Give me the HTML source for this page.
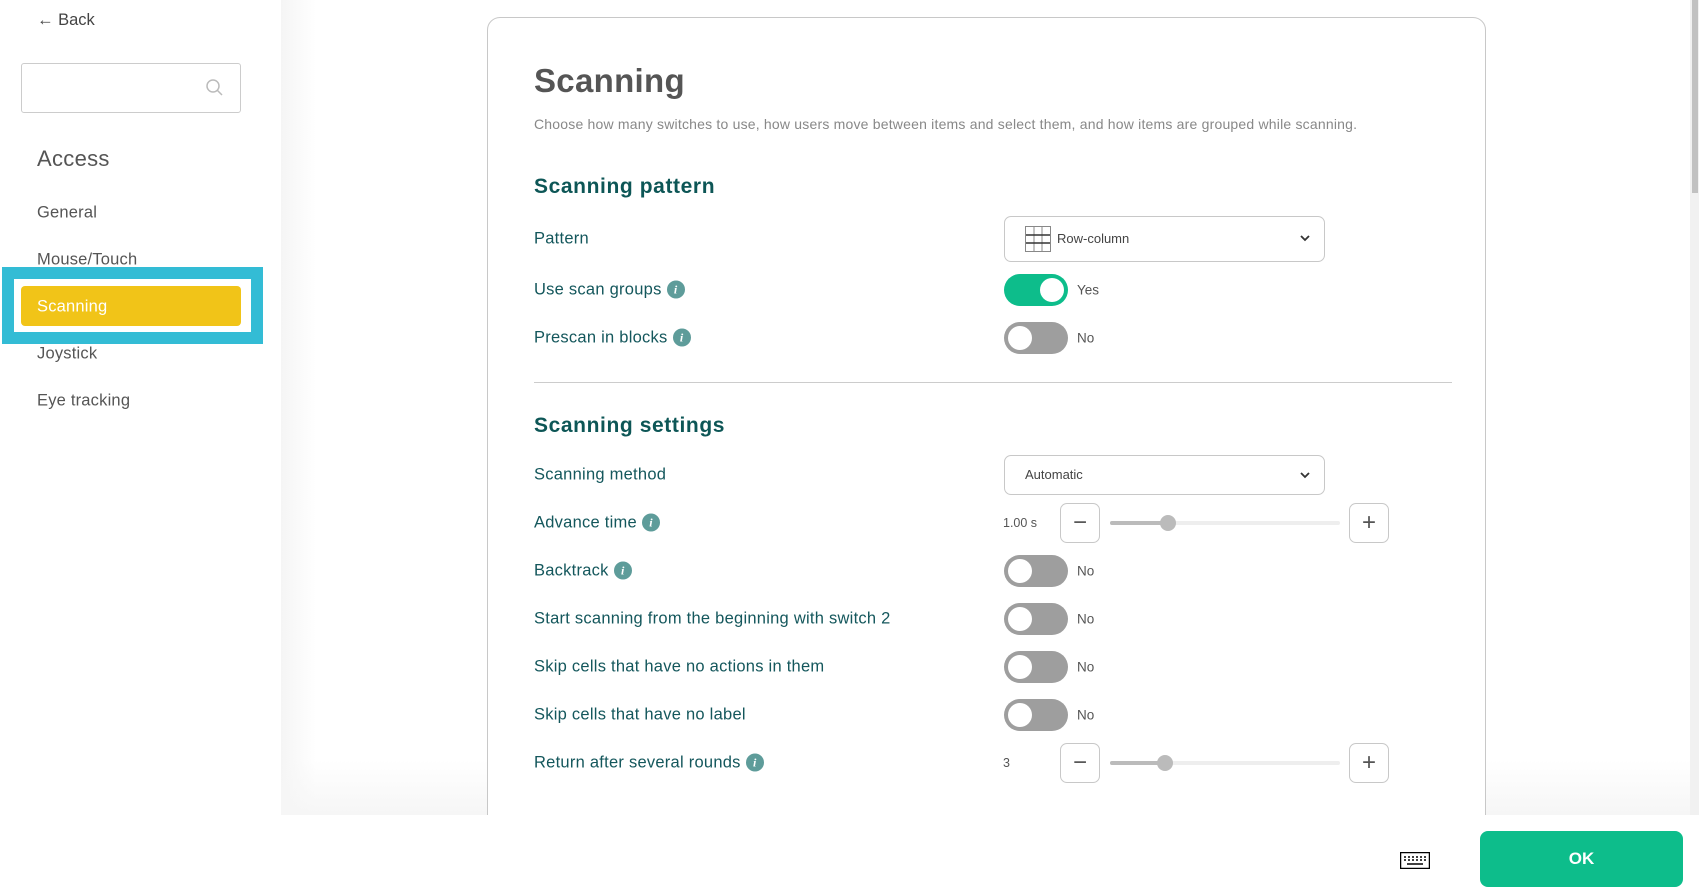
<!DOCTYPE html>
<html><head><meta charset="utf-8"><style>
*{box-sizing:border-box;margin:0;padding:0}
body{width:1699px;height:895px;overflow:hidden;background:#fff;font-family:"Liberation Sans",sans-serif;position:relative}
.a{position:absolute;white-space:nowrap}
.side{left:0;top:0;width:281px;height:895px;background:#fff}
.main{left:281px;top:0;width:1410px;height:815px;background:linear-gradient(to right,#f5f5f5,#fff 35px);}
.fade{left:281px;top:760px;width:1410px;height:55px;background:linear-gradient(#fff0,#f6f6f6)}
.card{left:487px;top:17px;width:999px;height:820px;border:1.5px solid #c8c8c8;border-radius:13px;background:#fff}
.lbl{font-size:16.5px;letter-spacing:0.25px;color:#14575c;transform:translateY(-50%)}
.nav{font-size:16.5px;letter-spacing:0.2px;color:#555;transform:translateY(-50%);left:37px}
.info{display:inline-block;width:18px;height:18px;border-radius:50%;background:#5e9c9a;color:#fff;font:italic bold 12px "Liberation Serif",serif;text-align:center;line-height:18px;vertical-align:1px;margin-left:5px;letter-spacing:0}
.tg{width:64px;height:32px;border-radius:16px;background:#9e9e9e;left:1004px}
.tg::after{content:"";position:absolute;left:4px;top:4px;width:24px;height:24px;border-radius:50%;background:#fff}
.tg.on{background:#0dbd8b}.tg.on::after{left:36px}
.yn{left:1077px;font-size:13.5px;color:#555;transform:translateY(-50%)}
.dd{left:1004px;width:321px;border:1px solid #c8c8c8;border-radius:7px;font-size:13px;color:#444}
.btn{width:40px;height:40px;border:1px solid #c8c8c8;border-radius:7px;background:#fff;text-align:center;line-height:37px;font-size:24px;color:#555}
.trk{left:1110px;width:230px;height:4px;border-radius:2px;background:#eee}
.fill{left:1110px;height:4px;border-radius:2px;background:#bbb}
.th{width:16px;height:16px;border-radius:50%;background:#bbb}
h2{font-weight:bold}
</style></head><body>
<div class="a side"></div>
<div class="a main"></div>
<div class="a fade"></div>
<div class="a" style="left:1690px;top:0;width:9px;height:815px;background:#f1f1f1"></div>
<div class="a" style="left:1692px;top:0;width:6px;height:193px;background:#c1c1c1"></div>

<div class="a" style="left:37px;top:11px;font-size:16.5px;color:#444">← Back</div>
<div class="a" style="left:21px;top:63px;width:220px;height:50px;border:1px solid #ccc;border-radius:3px"></div>
<svg class="a" style="left:205px;top:78px" width="20" height="20"><circle cx="8" cy="8" r="6" fill="none" stroke="#bbb" stroke-width="1.5"/><path d="M12.5 12.5L17 17" stroke="#bbb" stroke-width="1.5"/></svg>
<div class="a" style="left:37px;top:146px;font-size:22px;color:#555;letter-spacing:0.3px">Access</div>
<div class="a nav" style="top:213px">General</div>
<div class="a nav" style="top:260px">Mouse/Touch</div>
<div class="a" style="left:2px;top:267px;width:261px;height:77px;border:12px solid #33bcd5"></div>
<div class="a" style="left:21px;top:286px;width:220px;height:40px;background:#f1c418;border-radius:4px"></div>
<div class="a nav" style="top:307px;color:#fff">Scanning</div>
<div class="a nav" style="top:354px">Joystick</div>
<div class="a nav" style="top:401px">Eye tracking</div>

<div class="a card"></div>
<div class="a" style="left:534px;top:62px;font-size:33px;color:#555;font-weight:bold;letter-spacing:0.3px">Scanning</div>
<div class="a" style="left:534px;top:116px;font-size:14px;letter-spacing:0.2px;color:#888">Choose how many switches to use, how users move between items and select them, and how items are grouped while scanning.</div>
<div class="a" style="left:534px;top:175px;font-size:21px;color:#0d5656;font-weight:bold;letter-spacing:0.6px">Scanning pattern</div>
<div class="a lbl" style="left:534px;top:239px">Pattern</div>
<div class="a lbl" style="left:534px;top:290px">Use scan groups<span class="info">i</span></div>
<div class="a lbl" style="left:534px;top:338px">Prescan in blocks<span class="info">i</span></div>
<div class="a" style="left:534px;top:382px;width:918px;height:1px;background:#ccc"></div>
<div class="a" style="left:534px;top:414px;font-size:21px;color:#0d5656;font-weight:bold;letter-spacing:0.6px">Scanning settings</div>
<div class="a lbl" style="left:534px;top:475px">Scanning method</div>
<div class="a lbl" style="left:534px;top:523px">Advance time<span class="info">i</span></div>
<div class="a lbl" style="left:534px;top:571px">Backtrack<span class="info">i</span></div>
<div class="a lbl" style="left:534px;top:619px">Start scanning from the beginning with switch 2</div>
<div class="a lbl" style="left:534px;top:667px">Skip cells that have no actions in them</div>
<div class="a lbl" style="left:534px;top:715px">Skip cells that have no label</div>
<div class="a lbl" style="left:534px;top:763px">Return after several rounds<span class="info">i</span></div>

<div class="a dd" style="top:216px;height:46px"></div>
<svg class="a" style="left:1025px;top:226px" width="26" height="26"><rect x="0.5" y="0.5" width="25" height="25" fill="none" stroke="#888"/><path d="M9 1V25M17 1V25M1 9H25M1 17H25" stroke="#888"/><path d="M1 9H25M1 17H25" stroke="#333" stroke-width="1.5"/></svg>
<div class="a" style="left:1057px;top:231px;font-size:13px;color:#444">Row-column</div>
<svg class="a" style="left:1300px;top:234px" width="10" height="8"><path d="M1 2L5 6L9 2" fill="none" stroke="#333" stroke-width="1.8"/></svg>
<div class="a tg on" style="top:274px"></div><div class="a yn" style="top:290px">Yes</div>
<div class="a tg" style="top:322px"></div><div class="a yn" style="top:338px">No</div>

<div class="a dd" style="top:455px;height:40px"></div>
<div class="a" style="left:1025px;top:467px;font-size:13px;color:#444">Automatic</div>
<svg class="a" style="left:1300px;top:471px" width="10" height="8"><path d="M1 2L5 6L9 2" fill="none" stroke="#333" stroke-width="1.8"/></svg>

<div class="a" style="left:1003px;top:516px;font-size:12.5px;color:#555">1.00 s</div>
<div class="a btn" style="left:1060px;top:503px">−</div>
<div class="a trk" style="top:521px"></div><div class="a fill" style="top:521px;width:58px"></div>
<div class="a th" style="left:1160px;top:515px"></div>
<div class="a btn" style="left:1349px;top:503px">+</div>

<div class="a tg" style="top:555px"></div><div class="a yn" style="top:571px">No</div>
<div class="a tg" style="top:603px"></div><div class="a yn" style="top:619px">No</div>
<div class="a tg" style="top:651px"></div><div class="a yn" style="top:667px">No</div>
<div class="a tg" style="top:699px"></div><div class="a yn" style="top:715px">No</div>

<div class="a" style="left:1003px;top:756px;font-size:12.5px;color:#555">3</div>
<div class="a btn" style="left:1060px;top:743px">−</div>
<div class="a trk" style="top:761px"></div><div class="a fill" style="top:761px;width:55px"></div>
<div class="a th" style="left:1157px;top:755px"></div>
<div class="a btn" style="left:1349px;top:743px">+</div>

<div class="a" style="left:0;top:815px;width:1699px;height:80px;background:#fff"></div>
<svg class="a" style="left:1400px;top:852px" width="30" height="17"><rect x="0.5" y="0.5" width="29" height="16" fill="#fff" stroke="#000" stroke-width="1.5"/><path d="M4 5h2M8 5h2M12 5h2M16 5h2M20 5h2M24 5h2M4 8h2M8 8h2M12 8h2M16 8h2M20 8h2M24 8h2M7 12h16" stroke="#000" stroke-width="1.5"/></svg>
<div class="a" style="left:1480px;top:831px;width:203px;height:56px;background:#0dbd8b;border-radius:8px;color:#fff;font-size:17px;font-weight:bold;text-align:center;line-height:56px">OK</div>
</body></html>
